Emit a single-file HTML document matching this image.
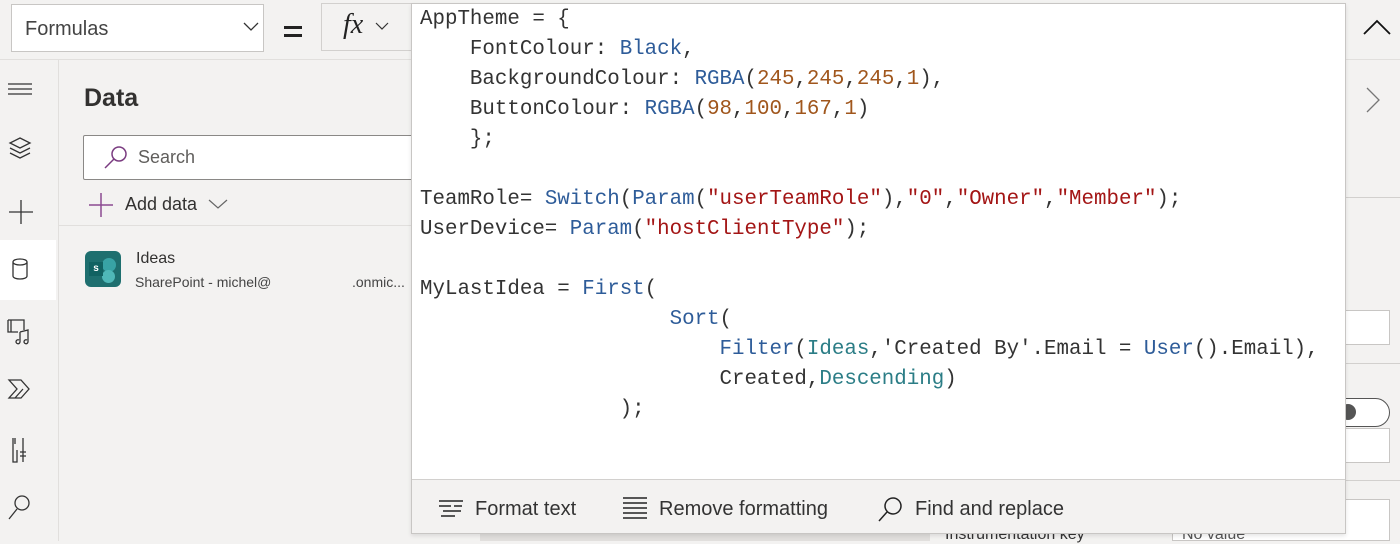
<!DOCTYPE html>
<html><head><meta charset="utf-8"><style>
*{margin:0;padding:0;box-sizing:border-box}
body{width:1400px;height:541px;overflow:hidden;background:#f3f2f1;font-family:"Liberation Sans",sans-serif;position:relative;color:#323130}
.abs{position:absolute}
.code{position:absolute;left:420px;top:5px;font-family:"Liberation Mono",monospace;font-size:20.8px;line-height:30px;white-space:pre;color:#333}
.k{color:#2e5c99}.n{color:#a0561c}.s{color:#a31515}.t{color:#2b7d86}
</style></head><body>
<div class="abs" style="left:0;top:59px;width:1400px;height:1px;background:#e1dfdd"></div>
<div class="abs" style="left:11px;top:4px;width:253px;height:48px;background:#fff;border:1px solid #c8c6c4"></div>
<div class="abs" style="left:25px;top:18px;font-size:20px;color:#444">Formulas</div>
<svg class="abs" style="left:243px;top:22px" width="16" height="10"><path d="M1 1l7 7 7-7" fill="none" stroke="#333" stroke-width="1.3"/></svg>
<div class="abs" style="left:284px;top:26px;width:18px;height:3px;background:#222"></div>
<div class="abs" style="left:284px;top:34px;width:18px;height:3px;background:#222"></div>
<div class="abs" style="left:321px;top:3px;width:95px;height:48px;background:#f3f2f1;border:1px solid #d2d0ce"></div>
<div class="abs" style="left:343px;top:9px;font-family:'Liberation Serif',serif;font-style:italic;font-size:28px;color:#222">fx</div>
<svg class="abs" style="left:375px;top:22px" width="14" height="8"><path d="M1 1l6 6 6-6" fill="none" stroke="#333" stroke-width="1.2"/></svg>
<svg class="abs" style="left:1362px;top:18px" width="30" height="18"><path d="M2 16L15 3l13 13" fill="none" stroke="#111" stroke-width="1.8"/></svg>
<div class="abs" style="left:58px;top:60px;width:1px;height:481px;background:#e1dfdd"></div>
<div class="abs" style="left:0;top:240px;width:56px;height:60px;background:#fff"></div>
<svg class="abs" style="left:6px;top:80px" width="30" height="450" fill="none" stroke="#333" stroke-width="1.3">
<path d="M2 4h24M2 9h24M2 14h24"/>
<path d="M14 58l10 5-10 5-10-5z M4 68l10 5 10-5 M4 73l10 5 10-5"/>
<path d="M15 120v24M3 132h24"/>
<path d="M7 182v14c0 4 14 4 14 0v-14 M7 182c0-4 14-4 14 0 0 4-14 4-14 0"/>
<path d="M2 240h16v10M2 240v12h10M5 240v12M14 252l8-2v12M14 252v10M22 262a2 2 0 1 1-1-2M14 262a2 2 0 1 1-1-2"/>
<path d="M3 300h12l8 9-8 9H3l8-9z M9 318l8-9"/>
<path d="M7 358v24h4v-12 M9 358v6 M17 358v24 M14 372h6 M14 376h6"/>
<circle cx="16" cy="423" r="7"/><path d="M11 429l-8 10"/>
</svg>
<div class="abs" style="left:84px;top:84px;font-size:25px;font-weight:bold;color:#323130">Data</div>
<div class="abs" style="left:83px;top:135px;width:340px;height:45px;background:#fff;border:1px solid #8a8886;border-radius:2px"></div>
<svg class="abs" style="left:102px;top:143px" width="28" height="28"><circle cx="17" cy="11" r="7" fill="none" stroke="#7a3b80" stroke-width="1.5"/><path d="M12 16l-9 9" stroke="#7a3b80" stroke-width="1.5"/></svg>
<div class="abs" style="left:138px;top:147px;font-size:18px;color:#605e5c">Search</div>
<svg class="abs" style="left:88px;top:192px" width="26" height="26"><path d="M13 1v24M1 13h24" stroke="#8b4a91" stroke-width="1.5"/></svg>
<div class="abs" style="left:125px;top:194px;font-size:18px;color:#323130">Add data</div>
<svg class="abs" style="left:208px;top:198px" width="20" height="12"><path d="M1 2l9 8 9-8" fill="none" stroke="#666" stroke-width="1.2"/></svg>
<div class="abs" style="left:59px;top:225px;width:353px;height:1px;background:#e1dfdd"></div>
<div class="abs" style="left:85px;top:251px;width:36px;height:36px;border-radius:6px;background:#1e6f6f"></div>
<div class="abs" style="left:102px;top:258px;width:14px;height:14px;border-radius:50%;background:#38a3a5"></div>
<div class="abs" style="left:102px;top:270px;width:13px;height:13px;border-radius:50%;background:#4fb8b8"></div>
<div class="abs" style="left:89px;top:262px;width:14px;height:14px;background:#116262;color:#fff;font-size:10px;font-weight:bold;text-align:center;line-height:14px">s</div>
<div class="abs" style="left:136px;top:250px;font-size:16px;color:#323130">Ideas</div>
<div class="abs" style="left:135px;top:274px;font-size:14px;color:#444">SharePoint - michel@</div>
<div class="abs" style="left:352px;top:274px;font-size:14px;color:#444">.onmic...</div>
<svg class="abs" style="left:1364px;top:86px" width="18" height="28"><path d="M3 2l12 12-12 12" fill="none" stroke="#777" stroke-width="1.3"/></svg>
<div class="abs" style="left:1345px;top:197px;width:55px;height:1px;background:#d2d0ce"></div>
<div class="abs" style="left:1330px;top:310px;width:60px;height:35px;background:#fff;border:1px solid #c8c6c4"></div>
<div class="abs" style="left:1345px;top:363px;width:55px;height:1px;background:#d2d0ce"></div>
<div class="abs" style="left:1300px;top:398px;width:90px;height:29px;background:#fff;border:1px solid #555;border-radius:15px"></div>
<div class="abs" style="left:1340px;top:404px;width:16px;height:16px;background:#555;border-radius:50%"></div>
<div class="abs" style="left:1330px;top:428px;width:60px;height:35px;background:#fff;border:1px solid #c8c6c4"></div>
<div class="abs" style="left:1345px;top:480px;width:55px;height:1px;background:#d2d0ce"></div>
<div class="abs" style="left:1172px;top:499px;width:218px;height:42px;background:#fff;border:1px solid #c8c6c4"></div>
<div class="abs" style="left:1182px;top:526px;font-size:16px;color:#555">No value</div>
<div class="abs" style="left:945px;top:526px;font-size:16px;color:#333">Instrumentation key</div>
<div class="abs" style="left:480px;top:533px;width:450px;height:8px;background:#e1dfdd"></div>
<div class="abs" style="left:411px;top:3px;width:935px;height:531px;background:#fff;border:1px solid #c8c6c4;box-shadow:0 2px 4px rgba(0,0,0,.1)"></div>
<div class="abs" style="left:412px;top:479px;width:933px;height:54px;background:#f3f2f1;border-top:1px solid #d2d0ce"></div>
<div class="code">AppTheme = {
    FontColour: <span class="k">Black</span>,
    BackgroundColour: <span class="k">RGBA</span>(<span class="n">245</span>,<span class="n">245</span>,<span class="n">245</span>,<span class="n">1</span>),
    ButtonColour: <span class="k">RGBA</span>(<span class="n">98</span>,<span class="n">100</span>,<span class="n">167</span>,<span class="n">1</span>)
    };

TeamRole= <span class="k">Switch</span>(<span class="k">Param</span>(<span class="s">"userTeamRole"</span>),<span class="s">"0"</span>,<span class="s">"Owner"</span>,<span class="s">"Member"</span>);
UserDevice= <span class="k">Param</span>(<span class="s">"hostClientType"</span>);

MyLastIdea = <span class="k">First</span>(
                    <span class="k">Sort</span>(
                        <span class="k">Filter</span>(<span class="t">Ideas</span>,'Created By'.Email = <span class="k">User</span>().Email),
                        Created,<span class="t">Descending</span>)
                );</div>
<svg class="abs" style="left:438px;top:498px" width="26" height="22" stroke="#222" stroke-width="1.5"><path d="M1 3h24M1 8h12M16 8h8M5 13h18M3 18h14"/></svg>
<div class="abs" style="left:475px;top:498px;font-size:20px;color:#333">Format text</div>
<svg class="abs" style="left:622px;top:496px" width="26" height="24" stroke="#222" stroke-width="1.5"><path d="M1 2h24M1 7h24M1 12h24M1 17h24M1 22h24"/></svg>
<div class="abs" style="left:659px;top:498px;font-size:20px;color:#333">Remove formatting</div>
<svg class="abs" style="left:877px;top:496px" width="28" height="28"><circle cx="16" cy="10" r="8" fill="none" stroke="#222" stroke-width="1.5"/><path d="M10 16l-8 9" stroke="#222" stroke-width="1.5"/></svg>
<div class="abs" style="left:915px;top:498px;font-size:20px;color:#333">Find and replace</div>
</body></html>
